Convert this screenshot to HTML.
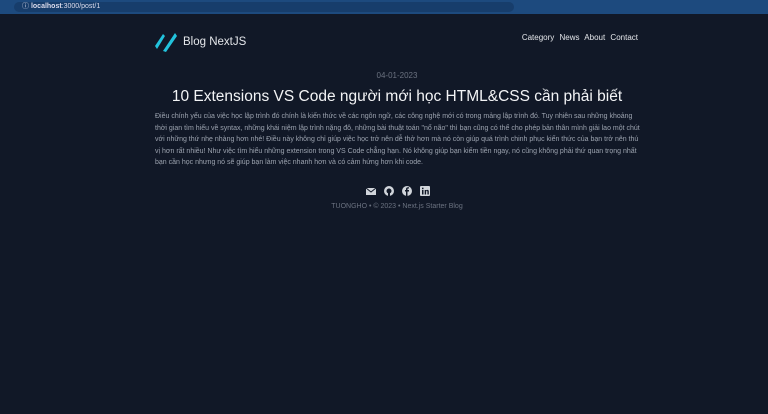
<!DOCTYPE html>
<html><head><meta charset="utf-8"><style>
body{margin:0;width:768px;height:414px;background:#111827;font-family:"Liberation Sans","DejaVu Sans",sans-serif;overflow:hidden;position:relative}
.bar{position:absolute;left:0;top:0;width:768px;height:14px;background:#1d4a7e}
.url{position:absolute;left:14px;top:2px;width:492px;height:10px;background:#173d6b;border-radius:5px;font-size:7px;color:#dde;line-height:10px;padding-left:8px}
.logo{position:absolute;left:155px;top:32px}
.brand{position:absolute;left:183px;top:36px;color:#e5e7eb;font-size:11.5px}
.nav{position:absolute;right:130px;top:33px;color:#e5e7eb;font-size:8px;word-spacing:3px}
.date{position:absolute;top:71px;width:794px;text-align:center;color:#6b7280;font-size:8px}
h1{position:absolute;top:88px;left:0;width:794px;text-align:center;margin:0;font-weight:normal;color:#f3f4f6;font-size:15.5px}
p{position:absolute;left:155px;top:111px;width:486px;margin:0;color:#9ca3af;font-size:7px;line-height:11.5px}
.icons{position:absolute;top:186px;left:366px;display:flex;gap:8px}
.foot{position:absolute;top:203px;width:794px;text-align:center;color:#6b7280;font-size:7px}
</style></head><body>
<div class="bar"><div class="url">ⓘ <b>localhost</b>:3000/post/1</div></div>
<svg class="logo" width="24" height="20" viewBox="0 0 24 20"><path d="M0 14 L8 2 L10 4 L2 17Z M8 19 L20 1 L22 4 L11 20Z" fill="#22c3dd"/></svg>
<div class="brand">Blog NextJS</div>
<div class="nav">Category News About Contact</div>
<div class="date">04-01-2023</div>
<h1>10 Extensions VS Code người mới học HTML&amp;CSS cần phải biết</h1>
<p>Điều chính yếu của việc học lập trình đó chính là kiến thức về các ngôn ngữ, các công nghệ mới có trong mảng lập trình đó. Tuy nhiên sau những khoảng thời gian tìm hiểu về syntax, những khái niệm lập trình nặng đô, những bài thuật toán "nổ não" thì bạn cũng có thể cho phép bản thân mình giải lao một chút với những thứ nhẹ nhàng hơn nhé! Điều này không chỉ giúp việc học trở nên dễ thở hơn mà nó còn giúp quá trình chinh phục kiến thức của bạn trở nên thú vị hơn rất nhiều! Như việc tìm hiểu những extension trong VS Code chẳng hạn. Nó không giúp bạn kiếm tiền ngay, nó cũng không phải thứ quan trọng nhất bạn cần học nhưng nó sẽ giúp bạn làm việc nhanh hơn và có cảm hứng hơn khi code.</p>
<div class="icons">
<svg width="10" height="10" viewBox="0 0 10 10"><rect x="0" y="2" width="10" height="7" fill="#d1d5db"/><path d="M0 2 L5 6 L10 2" stroke="#111827" fill="none"/></svg>
<svg width="10" height="10" viewBox="0 0 10 10"><circle cx="5" cy="5" r="5" fill="#d1d5db"/><circle cx="5" cy="5" r="2.5" fill="#111827"/><rect x="4" y="7" width="2" height="3" fill="#111827"/></svg>
<svg width="10" height="10" viewBox="0 0 10 10"><circle cx="5" cy="5" r="5" fill="#d1d5db"/><path d="M5.5 10V5.5H7V4H5.5V3.2c0-.5.2-.7.7-.7H7V1.2H6c-1.3 0-2 .8-2 2V4H3v1.5h1V10Z" fill="#111827"/></svg>
<svg width="10" height="10" viewBox="0 0 10 10"><rect width="10" height="10" rx="1" fill="#d1d5db"/><rect x="2" y="4" width="1.5" height="4.5" fill="#111827"/><rect x="2" y="1.7" width="1.5" height="1.5" fill="#111827"/><path d="M4.7 8.5V4H6v.7c.4-.6 1-.8 1.5-.8 1 0 1.3.7 1.3 1.6v3H7.4V5.8c0-.5-.2-.8-.6-.8s-.7.3-.7.8v2.7Z" fill="#111827"/></svg>
</div>
<div class="foot">TUONGHO • © 2023 • Next.js Starter Blog</div>
</body></html>
